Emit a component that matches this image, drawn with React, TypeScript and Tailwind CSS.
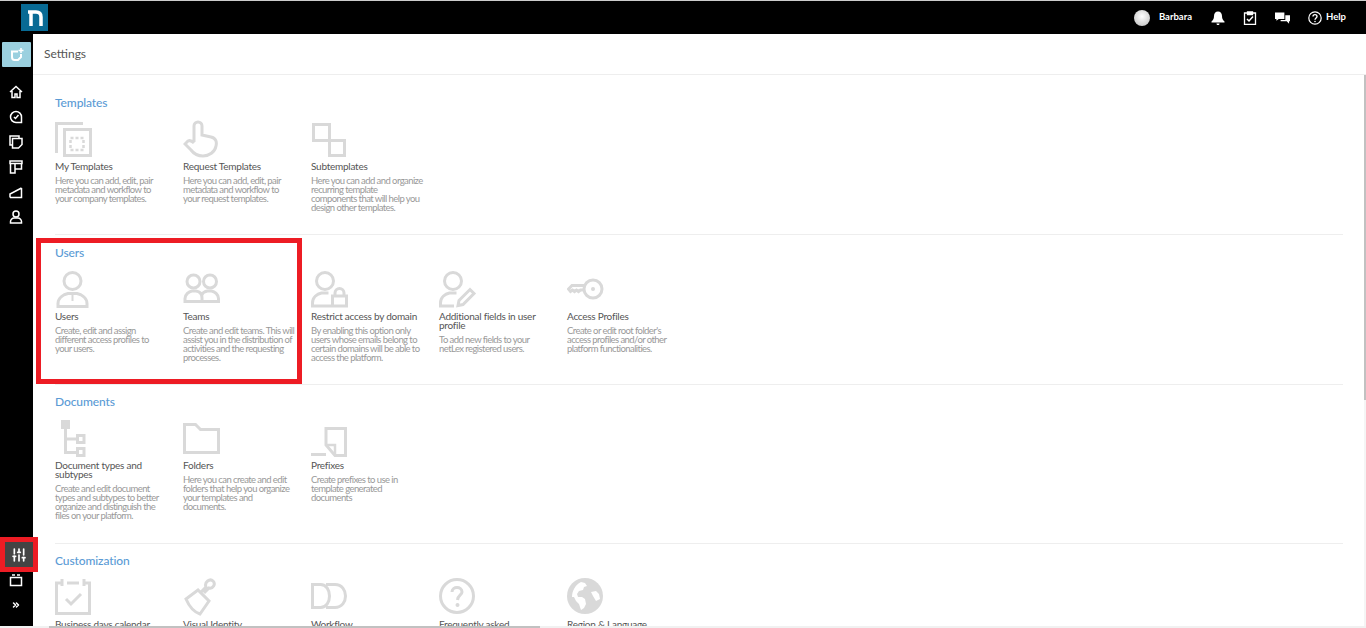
import type { ReactNode } from "react";
import { ChevronsRight, SlidersVertical } from "lucide-react";

const g = { fill: "none", stroke: "#d9d9d9", strokeWidth: 3 };

function Ico({ children }: { children: ReactNode }) {
  return (
    <svg viewBox="0 0 38 38" className="w-[38px] h-[38px] block">
      {children}
    </svg>
  );
}

const icons = {
  myTemplates: (
    <Ico>
      <g {...g}>
        <path d="M1.500 33V3.500H28" />
        <rect x="9.500" y="9.500" width="26" height="26" />
        <rect x="15.500" y="18" width="13" height="12" strokeDasharray="3 2" strokeWidth="2.500" />
      </g>
    </Ico>
  ),
  hand: (
    <Ico>
      <path
        {...g}
        d="M11 22V6a4 4 0 0 1 8 0v9l9 2c5 1 6 5 5 9-1 6-7 10-13 10-5 0-9-2-12-6l-6-6 3-3c2-1 4 0 6 2"
      />
    </Ico>
  ),
  sub: (
    <Ico>
      <g {...g}>
        <rect x="2.500" y="4.500" width="16" height="16" />
        <rect x="18.500" y="20.500" width="15" height="15" />
      </g>
    </Ico>
  ),
  user: (
    <Ico>
      <g {...g}>
        <circle cx="17.500" cy="11" r="8.500" />
        <path d="M3 36.500v-3c0-6 6-9 10-10h9c4 1 10 4 10 10v3H3z" />
      </g>
      <path d="M17.500 24v7" stroke="#d9d9d9" strokeWidth="2" />
    </Ico>
  ),
  teams: (
    <Ico>
      <g {...g}>
        <circle cx="10.500" cy="11.500" r="6.500" />
        <circle cx="27" cy="11.500" r="6.500" />
        <path d="M2 31.500v-3c0-4 4-7 7-7.500h4c4 .5 6 3 6 7v3.500H2z" />
        <path d="M19 31.500h16.500v-3c0-4-4-7-7-7.500h-4c-3 .5-5 2-6 4" />
      </g>
    </Ico>
  ),
  restrict: (
    <Ico>
      <g {...g}>
        <circle cx="14" cy="11" r="8.500" />
        <path d="M20 36H1.500v-3c0-6 5-9 9-10h7" />
        <rect x="21.500" y="26" width="14" height="10" />
        <path d="M24 26v-3a4 4 0 0 1 9 0v3" />
      </g>
    </Ico>
  ),
  fields: (
    <Ico>
      <g {...g}>
        <circle cx="14" cy="11" r="8.500" />
        <path d="M15 36H1.500v-3c0-6 5-9 9-10h7" />
        <path d="M19 35.500l1-5 11-11 4 4-11 11z" />
      </g>
    </Ico>
  ),
  key: (
    <Ico>
      <g {...g}>
        <circle cx="26" cy="19" r="9" />
        <path d="M17 15.500H5L1.500 19l2 2.500 2-1.500 2 1.500 2-1.500 2 1.500 2-1.500H17" />
      </g>
      <circle cx="26" cy="19" r="2" fill="#d9d9d9" />
    </Ico>
  ),
  docTypes: (
    <Ico>
      <rect x="6" y="1" width="9" height="9" fill="#d9d9d9" />
      <g {...g}>
        <path d="M10.500 10v23.500H21M10.500 20H21" />
        <rect x="22.500" y="16.500" width="6.500" height="7" />
        <rect x="22.500" y="29.500" width="6.500" height="7" />
      </g>
    </Ico>
  ),
  folder: (
    <Ico>
      <path {...g} d="M1.500 33.500V5.500h11l5 5h18v23z" />
    </Ico>
  ),
  prefixes: (
    <Ico>
      <g {...g}>
        <path d="M15 26V9.500h19.500v27H24z" />
        <path d="M15 26h9v10.500" strokeWidth="2.500" />
        <path d="M0 35.500h15" />
      </g>
    </Ico>
  ),
  calendar: (
    <Ico>
      <g {...g}>
        <path d="M7 5H1.500v30.500h33V5H29M12 5h12" />
        <path d="M7 1v7M29 1v7" />
        <path d="M11 21l5 5 10-10" />
      </g>
    </Ico>
  ),
  brush: (
    <Ico>
      <g {...g}>
        <path d="M3 21l12-9 11 11-9 13c-6-2-11-8-14-15z" />
        <path d="M18 14l5-5c-2-5 4-9 7-6 3 3 0 8-4 7l-5 5" />
      </g>
    </Ico>
  ),
  workflow: (
    <Ico>
      <g {...g}>
        <path d="M1.500 6.500h8c12 0 12 23 0 23h-8z" />
        <path d="M15 6.500h9c14 0 14 23 0 23h-9" />
      </g>
    </Ico>
  ),
  faq: (
    <Ico>
      <circle {...g} cx="18" cy="18" r="16.500" />
      <path d="M13 14c0-6 10-6 10 0 0 3-4 3-4.500 8" fill="none" stroke="#d9d9d9" strokeWidth="3" />
      <circle cx="18.500" cy="27" r="2" fill="#d9d9d9" />
    </Ico>
  ),
  globe: (
    <Ico>
      <circle cx="18" cy="18" r="18" fill="#d9d9d9" />
      <path
        fill="#fff"
        d="M14 4l4 1 2 3-3 1-1 3-4 1-2 3 1 3 4 0 3 2 1 5-2 4-3 2-2-6-3-3-2-4-2 0c0-6 3-12 9-15zM24 14l5-1 3 3 1 5-4 2-3-5z"
      />
    </Ico>
  ),
};

type Item = { icon: ReactNode; title: string; desc?: string };

const sections: { heading: string; spacing: string; items: Item[] }[] = [
  {
    heading: "Templates",
    spacing: "pt-[10px] pb-[22px]",
    items: [
      { icon: icons.myTemplates, title: "My Templates", desc: "Here you can add, edit, pair metadata and workflow to your company templates." },
      { icon: icons.hand, title: "Request Templates", desc: "Here you can add, edit, pair metadata and workflow to your request templates." },
      { icon: icons.sub, title: "Subtemplates", desc: "Here you can add and organize recurring template components that will help you design other templates." },
    ],
  },
  {
    heading: "Users",
    spacing: "border-t border-[#eee] pt-[9px] pb-[22px]",
    items: [
      { icon: icons.user, title: "Users", desc: "Create, edit and assign different access profiles to your\u00a0users." },
      { icon: icons.teams, title: "Teams", desc: "Create and edit teams. This will assist you in the distribution of activities and the requesting processes." },
      { icon: icons.restrict, title: "Restrict access by domain", desc: "By enabling this option only users whose emails belong to certain domains will be able to access the platform." },
      { icon: icons.fields, title: "Additional fields in user profile", desc: "To add new fields to your netLex registered users." },
      { icon: icons.key, title: "Access Profiles", desc: "Create or edit root folder's access profiles and/or other platform functionalities." },
    ],
  },
  {
    heading: "Documents",
    spacing: "border-t border-[#eee] pt-[8px] pb-[23px]",
    items: [
      { icon: icons.docTypes, title: "Document types and subtypes", desc: "Create and edit document types and subtypes to better organize and distinguish the files on your platform." },
      { icon: icons.folder, title: "Folders", desc: "Here you can create and edit folders that help you organize your templates and documents." },
      { icon: icons.prefixes, title: "Prefixes", desc: "Create prefixes to use in template generated documents" },
    ],
  },
  {
    heading: "Customization",
    spacing: "border-t border-[#eee] pt-[8px] pb-[22px]",
    items: [
      { icon: icons.calendar, title: "Business days calendar" },
      { icon: icons.brush, title: "Visual Identity" },
      { icon: icons.workflow, title: "Workflow" },
      { icon: icons.faq, title: "Frequently asked questions" },
      { icon: icons.globe, title: "Region & Language" },
    ],
  },
];

function Card({ item }: { item: Item }) {
  return (
    <div className="w-[128px] shrink-0">
      {item.icon}
      <div className="w-[112.5px] mt-[4px]">
        <h4 className="text-[10px] leading-[9px] text-[#555] tracking-[-0.25px]">{item.title}</h4>
        {item.desc && (
          <p className="mt-[5px] text-[9.5px] leading-[9px] text-[#999] tracking-[-0.57px]">{item.desc}</p>
        )}
      </div>
    </div>
  );
}

function SideIcon({ children }: { children: ReactNode }) {
  return (
    <div className="h-[25px] flex items-center justify-center w-[31px]">
      <svg viewBox="0 0 14 14" className="w-[14px] h-[14px]" fill="none" stroke="#fff" strokeWidth="1.500">
        {children}
      </svg>
    </div>
  );
}

export default function App() {
  return (
    <div className="relative h-[628px] w-[1366px] overflow-hidden flex flex-col bg-white font-['Lato','Open_Sans',sans-serif]">
      {/* top bar */}
      <header className="h-[34px] shrink-0 bg-black border-t border-[#ccc] flex items-center text-white text-[9.5px] font-bold pl-[21px]">
        <div className="w-[27px] h-[27px] bg-[#086a94] flex items-center justify-center">
          <svg viewBox="0 0 20 20" className="w-[20px] h-[20px]" fill="none" stroke="#fff" strokeWidth="3.500">
            <path d="M3 4h8c4 0 5 2 5 5v9M6 4v14" />
          </svg>
        </div>
        <div className="ml-auto flex items-center pr-[20px]">
          <div className="w-[16px] h-[16px] rounded-full bg-[radial-gradient(circle_at_50%_40%,#fff,#bbb)]" />
          <span className="ml-[9px]">Barbara</span>
          <svg viewBox="0 0 14 14" className="w-[14px] h-[14px] ml-[19px]" fill="#fff">
            <path d="M7 0.500c-2.500 0-4 2-4 4.500 0 3-1 4-2.500 5.500v1h13v-1C12 9 11 8 11 5c0-2.500-1.500-4.500-4-4.500zM5.500 12.500h3c0 1-.7 1.500-1.500 1.500s-1.500-.5-1.500-1.500z" />
          </svg>
          <svg viewBox="0 0 14 14" className="w-[14px] h-[14px] ml-[18px]" fill="none" stroke="#fff" strokeWidth="1.300">
            <path d="M4 2H1.500v11.500h11V2H10" />
            <path d="M4.500 1h5v2.500h-5z" fill="#fff" />
            <path d="M4 8l2 2 4-4.500" strokeWidth="1.500" />
          </svg>
          <svg viewBox="0 0 16 14" className="w-[15px] h-[14px] ml-[18px]" fill="#fff">
            <path d="M0 1h10v7H4L1.500 10V8H0z" />
            <path d="M11 4h5v6.500h-1V13l-2.500-2.500H6V9h5z" />
          </svg>
          <svg viewBox="0 0 14 14" className="w-[14px] h-[14px] ml-[18px]" fill="none" stroke="#fff" strokeWidth="1.200">
            <circle cx="7" cy="7" r="6.200" />
            <path d="M5 5.500c0-2.500 4-2.500 4 0C9 7 7 7 7 8.800" strokeWidth="1.400" />
            <circle cx="7" cy="10.500" r=".8" fill="#fff" stroke="none" />
          </svg>
          <span className="ml-[4px]">Help</span>
        </div>
      </header>

      <div className="flex flex-1 min-h-0">
        {/* left rail */}
        <aside className="w-[33px] shrink-0 bg-black flex flex-col pt-[8px] pb-[9px]">
          <div className="ml-[2px] w-[29px] h-[25px] rounded-[1px] bg-[#9bd0df] flex items-center justify-center">
            <svg viewBox="0 0 14 14" className="w-[14px] h-[14px]" fill="none" stroke="#fff" strokeWidth="2">
              <path d="M8 3.500H2v5.500c0 1.500 1 3 2.500 3H8l3-3V6" />
              <path d="M11 0v5M8.500 2.500h5" strokeWidth="1.500" />
            </svg>
          </div>
          <div className="mt-[12px] flex flex-col">
            <SideIcon>
              <path d="M1 7l6-5.500L13 7M3 6v6.500h3V9h2v3.500h3V6" />
            </SideIcon>
            <SideIcon>
              <path d="M12.500 12.500H7a5.500 5.500 0 1 1 5.500-5.500zM5 7l1.500 1.500L9.500 5" />
            </SideIcon>
            <SideIcon>
              <path d="M3 10H1V1h9v2M3.500 3.500h9.500v6l-3.500 3.500h-6z" />
            </SideIcon>
            <SideIcon>
              <path d="M1 1h12v2.500H1zM1.500 3.500V13H6V3.500M6 9h6.500V3.500" />
            </SideIcon>
            <SideIcon>
              <path d="M1 12.500h11.500V3M1 12.500V9L12.500 3" />
            </SideIcon>
            <SideIcon>
              <circle cx="7" cy="4" r="3" />
              <path d="M1.500 13v-1.500c0-2 2-3.500 3.500-3.500h4c1.500 0 3.500 1.500 3.500 3.500V13z" />
            </SideIcon>
          </div>
          <div className="mt-auto flex flex-col">
            <div className="w-[28px] h-[25px] ml-[5px] bg-[#444] flex items-center justify-center text-white">
              <SlidersVertical size={16} strokeWidth={2.500} />
            </div>
            <SideIcon>
              <path d="M1.500 4.500h11v8h-11z" />
              <path d="M3 2h3M8 2h3" />
            </SideIcon>
            <div className="h-[25px] w-[31px] flex items-center justify-center text-white">
              <ChevronsRight size={10} strokeWidth={3.500} />
            </div>
          </div>
        </aside>

        {/* page */}
        <main className="flex-1 min-w-0 flex flex-col">
          <div className="h-[41px] shrink-0 border-b border-[#eee] flex items-center pl-[11px] text-[12px] text-[#555]">
            Settings
          </div>
          <div className="flex-1 min-h-0 flex">
            <div className="flex-1 min-w-0 overflow-hidden pl-[22px] pr-[21px] pt-[9px]">
              {sections.map((s) => (
                <section key={s.heading} className={s.spacing}>
                  <h3 className="h-[18px] leading-[18px] text-[12px] font-medium tracking-[-0.1px] text-[#5b9bd5]">{s.heading}</h3>
                  <div className="mt-[8px] flex">
                    {s.items.map((item) => (
                      <Card key={item.title} item={item} />
                    ))}
                  </div>
                </section>
              ))}
            </div>
            {/* vertical scrollbar */}
            <div className="w-[2px] shrink-0 bg-[#f5f5f5]">
              <div className="h-[325px] bg-[#c1c1c1]" />
            </div>
          </div>
        </main>
      </div>

      {/* horizontal scrollbar */}
      <div className="h-[2px] shrink-0 bg-[#f1f1f1] pl-[49px]">
        <div className="h-[2px] w-[491px] bg-[#c1c1c1]" />
      </div>

      {/* annotation boxes */}
      <div className="absolute left-[36px] top-[238px] w-[266px] h-[146px] border-[5px] border-[#ed1c24]" />
      <div className="absolute left-0 top-[537px] w-[38px] h-[35px] border-[5px] border-[#ed1c24]" />
    </div>
  );
}
